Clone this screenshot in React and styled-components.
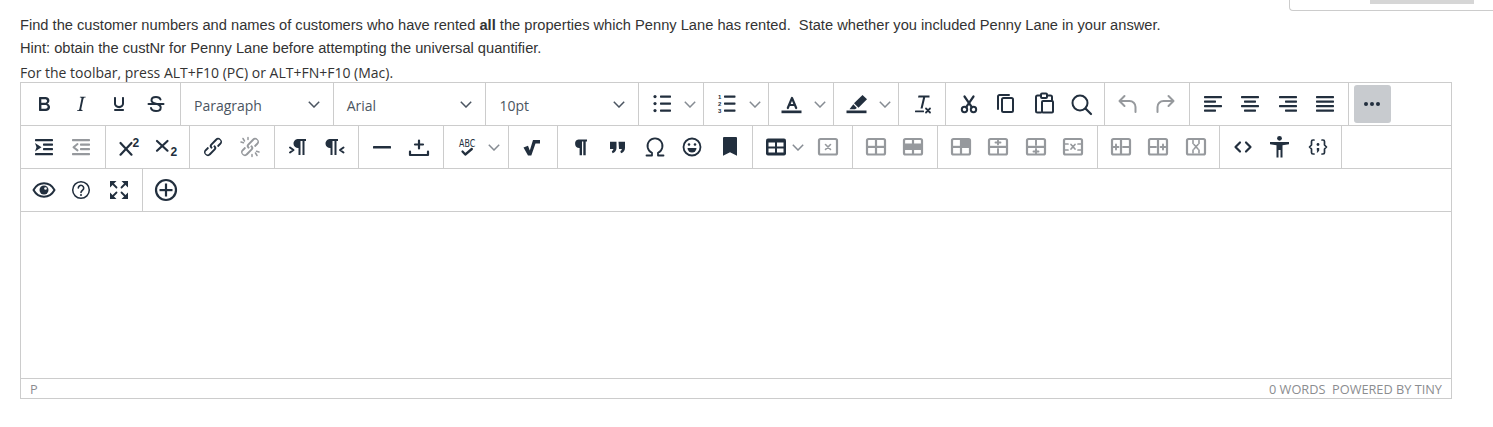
import React from 'react';
import styled, { createGlobalStyle } from 'styled-components';

const GlobalStyle = createGlobalStyle`
  html, body {
    margin: 0;
    padding: 0;
    background: #fff;
  }
`;

const Page = styled.div`
  width: 1493px;
  height: 427px;
  overflow: hidden;
  box-sizing: border-box;
  font-family: "Liberation Sans", Arial, sans-serif;
`;

const TopStrip = styled.div`
  display: flex;
  justify-content: flex-end;
  height: 11px;
  margin-bottom: 3px;
`;

const CornerCard = styled.div`
  box-sizing: border-box;
  width: 204px;
  height: 11px;
  padding-left: 80px;
  border: 1px solid #ccc;
  border-top: 0;
  border-right: 0;
  border-bottom-left-radius: 4px;
`;

const CornerBar = styled.div`
  width: 104px;
  height: 4px;
  background: #d6d6d6;
`;

const Question = styled.div`
  padding-left: 20px;
  font-size: 14.67px;
  line-height: 23px;
  color: #333;
`;

const ToolbarHint = styled.div`
  padding: 3px 0 0 20px;
  font-family: "Open Sans", sans-serif;
  font-size: 14px;
  line-height: 19px;
  color: #333;
`;

const Editor = styled.div`
  box-sizing: border-box;
  width: 1432px;
  height: 317px;
  margin-left: 20px;
  border: 1px solid #ccc;
  display: flex;
  flex-direction: column;
  color: #222f3e;
  font-family: "Open Sans", sans-serif;
`;

const ToolRow = styled.div`
  display: flex;
  height: 43px;
  flex: none;
  box-sizing: border-box;
  border-bottom: 1px solid #ccc;
`;

const Group = styled.div`
  display: flex;
  align-items: center;
  flex: none;
  box-sizing: border-box;
  width: ${(p) => p.$w || 'auto'};
  padding: 0 4.5px;
  border-right: ${(p) => (p.$plain ? '0' : '1px solid #ccc')};
`;

const Slot = styled.div`
  width: 37.25px;
  height: 42px;
  flex: none;
  display: flex;
  align-items: center;
  justify-content: center;
  color: ${(p) => (p.$off ? '#96999d' : '#222f3e')};
`;

const Caret = styled.div`
  width: ${(p) => (p.$tight ? '18px' : '17.75px')};
  margin-left: ${(p) => (p.$tight ? '-3px' : '0')};
  height: 42px;
  flex: none;
  display: flex;
  align-items: center;
  justify-content: ${(p) => (p.$tight ? 'flex-start' : 'center')};
  color: #868c93;
`;

const Select = styled.div`
  box-sizing: border-box;
  width: 152.7px;
  height: 42px;
  flex: none;
  display: flex;
  align-items: center;
  justify-content: space-between;
  padding: 0 13px 0 13px;
  border-right: 1px solid #ccc;
  font-size: 14px;
  color: #4b5561;
`;

const SelectLabel = styled.span`
  padding-top: 2px;
`;

const MoreButton = styled.div`
  width: 37px;
  height: 38px;
  display: flex;
  align-items: center;
  justify-content: center;
  background: #c8cbcf;
  border-radius: 3px;
`;

const EditArea = styled.div`
  flex: 1;
`;

const StatusBar = styled.div`
  height: 20px;
  flex: none;
  box-sizing: border-box;
  border-top: 1px solid #ccc;
  display: flex;
  align-items: center;
  justify-content: space-between;
  padding: 0 9px;
  font-size: 12.75px;
  color: #8b8d90;
`;

const Svg = ({ children }) => (
  <svg width="24" height="24" viewBox="0 0 24 24" fill="currentColor" aria-hidden="true">
    {children}
  </svg>
);

const Chevron = () => (
  <svg width="12" height="7" viewBox="0 0 12 7" fill="none" stroke="currentColor" strokeWidth="1.5" aria-hidden="true">
    <path d="M.8.8 6 6l5.200-5.200" />
  </svg>
);

const Stroke = ({ d, w = 2 }) => (
  <path d={d} fill="none" stroke="currentColor" strokeWidth={w} strokeLinecap="round" strokeLinejoin="round" />
);

const link = 'M6.2 12.3a1 1 0 0 1 1.4 1.4l-2 2a2 2 0 1 0 2.6 2.8l4.8-4.8a1 1 0 0 0 0-1.4 1 1 0 1 1 1.4-1.3 2.9 2.9 0 0 1 0 4L9.6 20a3.9 3.9 0 0 1-5.5-5.5l2-2zm11.6-.6a1 1 0 0 1-1.4-1.4l2-2a2 2 0 1 0-2.6-2.8L11 10.3a1 1 0 0 0 0 1.4 1 1 0 1 1-1.4 1.3 2.9 2.9 0 0 1 0-4L14.4 4a3.9 3.9 0 0 1 5.5 5.5l-2 2z';

const lines = (rows) => rows.map(([x, y, w], i) => <rect key={i} x={x} y={y} width={w} height="2.200" rx=".6" />);

const TableBase = ({ children, v = true, h = true }) => (
  <>
    <rect x="3" y="4" width="18" height="15.500" rx="1.500" fill="none" stroke="currentColor" strokeWidth="2.200" />
    {h && <rect x="3" y="10.800" width="18" height="2.200" />}
    {v && <rect x="10.900" y="4" width="2.200" height="15.500" />}
    {children}
  </>
);

const digit = { fontWeight: 700, fontFamily: 'Liberation Sans' };

const icons = {
  bold: <path d="M7.8 19c-.3 0-.5 0-.6-.2l-.2-.5V5.7c0-.2 0-.4.2-.5l.6-.2h5c1.5 0 2.7.3 3.5 1 .7.6 1.1 1.4 1.1 2.5a3 3 0 0 1-.6 1.9c-.4.6-1 1-1.6 1.2.4.1.9.3 1.3.6s.8.7 1 1.2c.4.4.5 1 .5 1.6 0 1.3-.4 2.3-1.3 3-.8.7-2.1 1-3.8 1H7.8zm5-8.3c.6 0 1.2-.1 1.6-.5.4-.3.6-.7.6-1.3 0-1.1-.8-1.7-2.3-1.7H9.3v3.5h3.4zm.5 6c.7 0 1.3-.1 1.7-.4.4-.4.6-.9.6-1.5s-.2-1-.7-1.4c-.4-.3-1-.4-2-.4H9.4v3.8h4z" />,
  italic: <path d="M16.7 4.7l-.1.9h-.3c-.6 0-1 0-1.4.3-.3.3-.4.6-.5 1.1l-2.1 9.8v.6c0 .5.4.8 1.2.8h.2l-.2.8H8l.2-.8h.2c1.1 0 1.8-.5 2-1.5l2-9.8.1-.5c0-.6-.4-.8-1.4-.8h-.3l.2-.9h5.8z" />,
  underline: <path d="M16 5c.6 0 1 .4 1 1v5.500a4 4 0 0 1-.4 1.800l-1 1.400a5.300 5.300 0 0 1-5.500 1 5 5 0 0 1-1.600-1c-.5-.4-.8-.9-1.100-1.400a4 4 0 0 1-.4-1.800V6c0-.6.4-1 1-1s1 .4 1 1v5.500c0 .3 0 .6.2 1l.6.7a3.300 3.300 0 0 0 2.200.8 3.400 3.400 0 0 0 2.200-.8c.3-.2.4-.5.6-.8l.2-.9V6c0-.6.4-1 1-1zM8 17h8c.6 0 1 .4 1 1s-.4 1-1 1H8a1 1 0 0 1 0-2z" />,
  strike: (
    <>
      <rect x="3.500" y="11" width="17" height="2" rx="1" />
      <Stroke d="M16.500 7.500C16 6 14.500 5 12 5 9.300 5 7.500 6.300 7.500 8.300c0 1.700 1.500 2.700 4.500 3.400 3 .7 4.700 1.700 4.700 3.700 0 2.200-2 3.600-4.700 3.600-2.700 0-4.500-1.100-5-3" />
    </>
  ),
  bullist: (
    <>
      <circle cx="5" cy="4.600" r="1.600" /><circle cx="5" cy="11.600" r="1.600" /><circle cx="5" cy="18.600" r="1.600" />
      {lines([[10, 3.500, 11], [10, 10.500, 11], [10, 17.500, 11]])}
    </>
  ),
  numlist: (
    <>
      <text x="3" y="7" fontSize="6" {...digit}>1</text>
      <text x="3" y="14" fontSize="6" {...digit}>2</text>
      <text x="3" y="20.500" fontSize="6" {...digit}>3</text>
      {lines([[9, 3.500, 11.500], [9, 10.500, 11.500], [9, 17.500, 11.500]])}
    </>
  ),
  forecolor: (
    <>
      <Stroke d="M7.800 16 12 6l4.200 10M9.300 13h5.400" w={2.200} />
      <rect x="1.500" y="18.500" width="20" height="2.700" />
    </>
  ),
  hilite: (
    <>
      <path d="M17.500 3 22 7.300l-8.500 8.500-4.500-4.500z" />
      <path d="M8.300 12.300l3.600 3.600-1.800 1.400H4.500z" />
      <rect x="1.500" y="18.500" width="20" height="2.700" />
    </>
  ),
  clear: (
    <>
      <path d="M8.500 3.500h11v2h-4.300l-2.600 11H10.500l2.600-11H8z" />
      <rect x="5" y="18.500" width="9" height="1.800" rx=".5" />
      <Stroke d="M16 16.500l4 4M20 16.500l-4 4" w={1.800} />
    </>
  ),
  cut: (
    <>
      <circle cx="7.500" cy="17.500" r="2.700" fill="none" stroke="currentColor" strokeWidth="2" />
      <circle cx="16.500" cy="17.500" r="2.700" fill="none" stroke="currentColor" strokeWidth="2" />
      <Stroke d="M9 15.300 16.500 4.500M15 15.300 7.500 4.500" w={2.200} />
    </>
  ),
  copy: (
    <>
      <rect x="8" y="6" width="11" height="14" rx="1.500" fill="none" stroke="currentColor" strokeWidth="2" />
      <Stroke d="M15 3H5.500A1.500 1.500 0 0 0 4 4.500V17" />
    </>
  ),
  paste: (
    <g transform="translate(0 -1)">
      <Stroke d="M9 4.500H5.500A1.500 1.500 0 0 0 4 6v14a1.500 1.500 0 0 0 1.500 1.500H9M15 4.500h3.500A1.500 1.500 0 0 1 20 6v3" />
      <rect x="9" y="2.500" width="6" height="4.500" rx="1" fill="none" stroke="currentColor" strokeWidth="2" />
      <rect x="10" y="10" width="11" height="11.500" rx="1" fill="none" stroke="currentColor" strokeWidth="2" />
    </g>
  ),
  search: (
    <>
      <circle cx="11" cy="11" r="7.500" fill="none" stroke="currentColor" strokeWidth="2" />
      <Stroke d="m16.500 16.500 5.500 5.500" w={2.200} />
    </>
  ),
  undo: <Stroke d="M8.500 4 3.500 9l5 5M4 9h9.500a6 6 0 0 1 6 6v5" />,
  redo: <Stroke d="M15.500 4l5 5-5 5M20 9h-9.500a6 6 0 0 0-6 6v5" />,
  left: lines([[3, 4, 18], [3, 8.500, 12], [3, 13, 18], [3, 17.500, 12]]),
  center: lines([[3, 4, 18], [6, 8.500, 12], [3, 13, 18], [6, 17.500, 12]]),
  right: lines([[3, 4, 18], [9, 8.500, 12], [3, 13, 18], [9, 17.500, 12]]),
  justify: lines([[3, 4, 18], [3, 8.500, 18], [3, 13, 18], [3, 17.500, 18]]),
  more: (
    <>
      <circle cx="6" cy="12" r="2" /><circle cx="12" cy="12" r="2" /><circle cx="18" cy="12" r="2" />
    </>
  ),
  indent: (
    <>
      {lines([[3, 4, 18], [11, 8.500, 10], [11, 13, 10], [3, 18, 18]])}
      <path d="m3 8 6.500 4.200L3 16.400l1.500-4.200z" />
    </>
  ),
  outdent: (
    <>
      {lines([[3, 4, 18], [11, 8.500, 10], [11, 13, 10], [3, 18, 18]])}
      <Stroke d="M8.500 9 4.500 12.200l4 3.200" />
    </>
  ),
  sup: (
    <>
      <Stroke d="M3.500 8 14.500 19.700M14.500 8 3.500 19.700" w={2.200} />
      <text x="15.500" y="12" fontSize="12" {...digit}>2</text>
    </>
  ),
  sub: (
    <>
      <Stroke d="M3 6 13.500 15.700M13.500 6 3 15.700" w={2.200} />
      <text x="16.500" y="20.700" fontSize="12" {...digit}>2</text>
    </>
  ),
  link: <path d={link} />,
  unlink: (
    <>
      <path d={link} />
      <Stroke d="M5 3.500 6.500 6M3 7l2.500.8M19 20.500 17.500 18M21 17l-2.500-.8M10 2.500v2M14 21.500v-2" w={1.500} />
    </>
  ),
  ltr: (
    <>
      <path d="M11.500 4H20v2h-1.500v14h-2V6h-2v14h-2v-7a4.500 4.500 0 0 1-1-9z" />
      <Stroke d="M4 12.500 7.500 15 4 17.500" />
    </>
  ),
  rtl: (
    <>
      <path d="M6.500 4H15v2h-1.500v14h-2V6h-2v14h-2v-7a4.500 4.500 0 0 1-1-9z" />
      <Stroke d="M20.500 12.500 17 15l3.500 2.500" />
    </>
  ),
  hr: <rect x="3" y="11" width="18" height="2.600" rx=".6" />,
  nbsp: (
    <>
      <Stroke d="M12 5.500v8M8 9.500h8" w={2.200} />
      <Stroke d="M3 16.500V20h18v-3.500" w={2.200} />
    </>
  ),
  spell: (
    <>
      <text transform="translate(4 11.500) scale(.72 1)" fontSize="11" fontFamily="DejaVu Sans">ABC</text>
      <Stroke d="m7.500 16.500 2.800 3 6.500-5.500" w={2.300} />
    </>
  ),
  math: <path d="M3.500 12.500 8 10.800l1.800 4.700L13 5h7v3.400h-4.500L11.300 20.500H8z" />,
  blocks: <path d="M9.500 4.500H18v2h-1.300v13.800h-2.400V6.500h-1.300v13.800h-2.400V13A4.300 4.300 0 0 1 9.500 4.500z" />,
  quote: <path d="M4 6.700h6.500v6.300c0 2.700-1.500 4.500-4 5.300l-.7-2.300c1-.3 1.500-.9 1.500-2H4zm8.500 0H19v6.300c0 2.700-1.500 4.500-4 5.300l-.7-2.300c1-.3 1.500-.9 1.500-2h-2.800z" />,
  omega: <Stroke d="M3.500 20.500h5.500v-2.800A7.500 7.500 0 1 1 15 17.700v2.800h5.500" w={1.800} />,
  emoji: (
    <>
      <circle cx="12" cy="12" r="8.500" fill="none" stroke="currentColor" strokeWidth="1.800" />
      <circle cx="9" cy="9.500" r="1.300" /><circle cx="15" cy="9.500" r="1.300" />
      <path d="M7.500 13h9a4.500 4.500 0 0 1-9 0z" />
    </>
  ),
  bookmark: <path d="M6 2h12a1 1 0 0 1 1 1V20.700l-7-3.500-7 3.500V3a1 1 0 0 1 1-1z" />,
  table: (
    <>
      <rect x="2" y="3.500" width="20" height="17" rx="2" />
      <rect x="4.500" y="7.500" width="6.500" height="4" fill="#fff" /><rect x="13" y="7.500" width="6.500" height="4" fill="#fff" />
      <rect x="4.500" y="13.500" width="6.500" height="4" fill="#fff" /><rect x="13" y="13.500" width="6.500" height="4" fill="#fff" />
    </>
  ),
  tableDelete: (
    <TableBase v={false} h={false}>
      <Stroke d="m9.500 9.500 5 5M14.500 9.500l-5 5" w={1.600} />
    </TableBase>
  ),
  cellProps: <TableBase />,
  rowProps: (
    <TableBase h={false}>
      <rect x="3" y="8.500" width="18" height="6.500" />
    </TableBase>
  ),
  merge: (
    <TableBase>
      <rect x="12" y="4" width="9" height="8" />
    </TableBase>
  ),
  rowAbove: (
    <TableBase v={false}>
      <Stroke d="M12 5.500v4M9.500 7.500h5M12 14v5" w={1.900} />
    </TableBase>
  ),
  rowBelow: (
    <TableBase v={false}>
      <Stroke d="M12 14v5M9.500 16.500h5M12 5v5" w={1.900} />
    </TableBase>
  ),
  rowDelete: (
    <TableBase h={false} v={false}>
      <Stroke d="m10 9.500 4 4.500M14 9.500 10 14M4 9h3M4 15h3M17 9h3M17 15h3" w={1.700} />
    </TableBase>
  ),
  colBefore: (
    <TableBase h={false}>
      <Stroke d="M4.500 12h5M7 9.500v5M14 12h6" w={1.900} />
    </TableBase>
  ),
  colAfter: (
    <TableBase h={false}>
      <Stroke d="M14.500 12h5M17 9.500v5M4 12h6" w={1.900} />
    </TableBase>
  ),
  colDelete: (
    <TableBase h={false} v={false}>
      <Stroke d="m10 9.500 4 4.500M14 9.500 10 14M9 5.500v3M15 5.500v3M9 15v3M15 15v3" w={1.600} />
    </TableBase>
  ),
  code: <Stroke d="M9 7.500 4.500 12 9 16.500M15 7.500l4.500 4.500L15 16.500" w={2.200} />,
  a11y: (
    <>
      <circle cx="11.500" cy="3.300" r="2.400" />
      <path d="M2 7h19v2.200l-6.500 1V22.500h-2v-7.500h-2V22.500h-2V10.200L2 9.200z" />
    </>
  ),
  template: (
    <>
      <Stroke d="M8 5H7a1.500 1.500 0 0 0-1.500 1.500v3.500L3.500 12l2 2v3.500A1.500 1.500 0 0 0 7 19h1M16 5h1a1.500 1.500 0 0 1 1.500 1.500v3.500l2 2-2 2v3.500A1.500 1.500 0 0 1 17 19h-1" w={1.700} />
      <circle cx="12" cy="9.500" r="1.400" />
      <path d="M10.800 13h2.400v2.500l-1.500 2h-1l.6-2h-.5z" />
    </>
  ),
  preview: (
    <>
      <Stroke d="M1.500 12C4 7.500 7.500 5.300 12 5.300S20 7.500 22.500 12C20 16.500 16.500 18.700 12 18.700S4 16.500 1.500 12z" />
      <circle cx="12" cy="12" r="4.500" />
      <circle cx="13.500" cy="10.500" r="1.300" fill="#fff" />
    </>
  ),
  help: (
    <>
      <circle cx="12" cy="12" r="8.300" fill="none" stroke="currentColor" strokeWidth="1.500" />
      <Stroke d="M9.300 10a2.700 2.700 0 1 1 4.300 2.200c-1 .7-1.600 1.100-1.600 2.300" w={1.600} />
      <circle cx="12" cy="17" r="1" />
    </>
  ),
  fullscreen: (
    <>
      <path d="M3 3h6.500L3 9.500zM21 3h-6.500L21 9.500zM3 21h6.500L3 14.500zM21 21h-6.500l6.500-6.500z" />
      <Stroke d="M6 6l3.500 3.500M18 6l-3.500 3.500M6 18l3.500-3.500M18 18l-3.500-3.500" w={1.800} />
    </>
  ),
  add: (
    <>
      <circle cx="12" cy="12" r="10" fill="none" stroke="currentColor" strokeWidth="2.200" />
      <rect x="5.500" y="11" width="13" height="2.200" />
      <rect x="10.900" y="5.500" width="2.200" height="13" />
    </>
  ),
};

const Tool = ({ name, off }) => (
  <Slot $off={off}>
    <Svg>{icons[name]}</Svg>
  </Slot>
);

const Split = ({ name, tight }) => (
  <>
    <Tool name={name} />
    <Caret $tight={tight}>
      <Chevron />
    </Caret>
  </>
);

const ToolGroup = ({ names, off, plain, w }) => (
  <Group $plain={plain} $w={w}>
    {names.map((n) => (
      <Tool key={n} name={n} off={off} />
    ))}
  </Group>
);

const FormatSelect = ({ label }) => (
  <Select>
    <SelectLabel>{label}</SelectLabel>
    <Chevron />
  </Select>
);

function App() {
  return (
    <Page>
      <GlobalStyle />
      <TopStrip>
        <CornerCard>
          <CornerBar />
        </CornerCard>
      </TopStrip>
      <Question>
        Find the customer numbers and names of customers who have rented <b>all</b> the properties which Penny Lane has rented.&nbsp; State whether you included Penny Lane in your answer.
        <br />
        Hint: obtain the custNr for Penny Lane before attempting the universal quantifier.
      </Question>
      <ToolbarHint>For the toolbar, press ALT+F10 (PC) or ALT+FN+F10 (Mac).</ToolbarHint>
      <Editor>
        <ToolRow>
          <ToolGroup names={['bold', 'italic', 'underline', 'strike']} w="160px" />
          <FormatSelect label="Paragraph" />
          <FormatSelect label="Arial" />
          <FormatSelect label="10pt" />
          <Group $w="65px"><Split name="bullist" /></Group>
          <Group $w="65px"><Split name="numlist" /></Group>
          <Group $w="65px"><Split name="forecolor" /></Group>
          <Group $w="65px"><Split name="hilite" /></Group>
          <ToolGroup names={['clear']} w="47px" />
          <ToolGroup names={['cut', 'copy', 'paste', 'search']} />
          <ToolGroup names={['undo', 'redo']} off w="85px" />
          <ToolGroup names={['left', 'center', 'right', 'justify']} />
          <Group $plain>
            <MoreButton>
              <Svg>{icons.more}</Svg>
            </MoreButton>
          </Group>
        </ToolRow>
        <ToolRow>
          <Group>
            <Tool name="indent" />
            <Tool name="outdent" off />
          </Group>
          <ToolGroup names={['sup', 'sub']} />
          <Group>
            <Tool name="link" />
            <Tool name="unlink" off />
          </Group>
          <ToolGroup names={['ltr', 'rtl']} />
          <ToolGroup names={['hr', 'nbsp']} />
          <Group $w="65px"><Split name="spell" /></Group>
          <ToolGroup names={['math']} w="49px" />
          <ToolGroup names={['blocks', 'quote', 'omega', 'emoji', 'bookmark']} w="195.500px" />
          <Group $w="100px">
            <Split name="table" tight />
            <Tool name="tableDelete" off />
          </Group>
          <ToolGroup names={['cellProps', 'rowProps']} off w="85px" />
          <ToolGroup names={['merge', 'rowAbove', 'rowBelow', 'rowDelete']} w="160px" off />
          <ToolGroup names={['colBefore', 'colAfter', 'colDelete']} off w="122px" />
          <ToolGroup names={['code', 'a11y', 'template']} w="122px" />
        </ToolRow>
        <ToolRow>
          <ToolGroup names={['preview', 'help', 'fullscreen']} />
          <ToolGroup names={['add']} plain />
        </ToolRow>
        <EditArea />
        <StatusBar>
          <span>P</span>
          <span>0 WORDS&nbsp; POWERED BY TINY</span>
        </StatusBar>
      </Editor>
    </Page>
  );
}

export default App;
